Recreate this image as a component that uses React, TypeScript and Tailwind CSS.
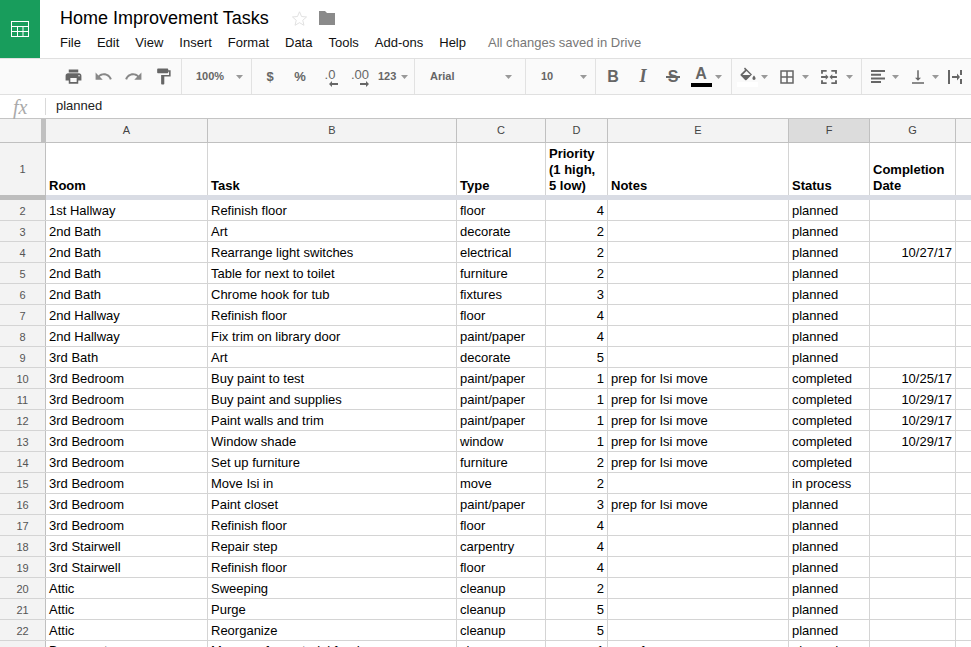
import React from "react";

const grid = "grid grid-cols-[46px_162px_249px_89px_62px_181px_81px_86px_16px]";

type R = [string, string, string, string, string, string, string];
const rows: R[] = [
  ["1st Hallway", "Refinish floor", "floor", "4", "", "planned", ""],
  ["2nd Bath", "Art", "decorate", "2", "", "planned", ""],
  ["2nd Bath", "Rearrange light switches", "electrical", "2", "", "planned", "10/27/17"],
  ["2nd Bath", "Table for next to toilet", "furniture", "2", "", "planned", ""],
  ["2nd Bath", "Chrome hook for tub", "fixtures", "3", "", "planned", ""],
  ["2nd Hallway", "Refinish floor", "floor", "4", "", "planned", ""],
  ["2nd Hallway", "Fix trim on library door", "paint/paper", "4", "", "planned", ""],
  ["3rd Bath", "Art", "decorate", "5", "", "planned", ""],
  ["3rd Bedroom", "Buy paint to test", "paint/paper", "1", "prep for Isi move", "completed", "10/25/17"],
  ["3rd Bedroom", "Buy paint and supplies", "paint/paper", "1", "prep for Isi move", "completed", "10/29/17"],
  ["3rd Bedroom", "Paint walls and trim", "paint/paper", "1", "prep for Isi move", "completed", "10/29/17"],
  ["3rd Bedroom", "Window shade", "window", "1", "prep for Isi move", "completed", "10/29/17"],
  ["3rd Bedroom", "Set up furniture", "furniture", "2", "prep for Isi move", "completed", ""],
  ["3rd Bedroom", "Move Isi in", "move", "2", "", "in process", ""],
  ["3rd Bedroom", "Paint closet", "paint/paper", "3", "prep for Isi move", "planned", ""],
  ["3rd Bedroom", "Refinish floor", "floor", "4", "", "planned", ""],
  ["3rd Stairwell", "Repair step", "carpentry", "4", "", "planned", ""],
  ["3rd Stairwell", "Refinish floor", "floor", "4", "", "planned", ""],
  ["Attic", "Sweeping", "cleanup", "2", "", "planned", ""],
  ["Attic", "Purge", "cleanup", "5", "", "planned", ""],
  ["Attic", "Reorganize", "cleanup", "5", "", "planned", ""],
  ["Basement", "Measure for material for door", "cleanup", "1", "prep for move", "planned", ""],
];

const Caret = ({ className = "" }: { className?: string }) => (
  <svg width="7" height="4" viewBox="0 0 7 4" className={"shrink-0 " + className}>
    <path d="M0 0h7L3.5 4z" fill="#999" />
  </svg>
);

const Icon = ({ d, size = 19, fill = "#666" }: { d: string; size?: number; fill?: string }) => (
  <svg width={size} height={size} viewBox="0 0 24 24" fill={fill}>
    <path d={d} />
  </svg>
);

const Btn = ({ children, w = "w-[30px]" }: { children: React.ReactNode; w?: string }) => (
  <div className={"relative flex h-full shrink-0 items-center justify-center " + w}>{children}</div>
);

const Group = ({ className, children }: { className: string; children: React.ReactNode }) => (
  <div className={"flex h-full shrink-0 items-center border-r border-[#e2e2e2] " + className}>{children}</div>
);

function Toolbar() {
  return (
    <div className="flex h-[35px] items-center bg-[#fafafa] font-['Liberation_Sans',sans-serif] text-[#555]">
      <Group className="w-[182px] pl-[58px]">
        <Btn><Icon d="M19 8H5c-1.66 0-3 1.34-3 3v6h4v4h12v-4h4v-6c0-1.66-1.34-3-3-3zm-3 11H8v-5h8v5zm3-7c-.55 0-1-.45-1-1s.45-1 1-1 1 .45 1 1-.45 1-1 1zm-1-9H6v4h12V3z" /></Btn>
        <Btn><Icon fill="#888" d="M12.5 8c-2.65 0-5.05.99-6.9 2.6L2 7v9h9l-3.62-3.62c1.39-1.16 3.16-1.88 5.12-1.88 3.54 0 6.55 2.31 7.6 5.5l2.37-.78C21.08 11.03 17.15 8 12.5 8z" /></Btn>
        <Btn><Icon fill="#888" d="M18.4 10.6C16.55 8.99 14.15 8 11.5 8c-4.65 0-8.58 3.03-9.96 7.22L3.9 16c1.05-3.19 4.05-5.5 7.6-5.5 1.95 0 3.73.72 5.12 1.88L13 16h9V7l-3.6 3.6z" /></Btn>
        <Btn><Icon d="M18 4V3c0-.55-.45-1-1-1H5c-.55 0-1 .45-1 1v4c0 .55.45 1 1 1h12c.55 0 1-.45 1-1V6h1v4H9v11c0 .55.45 1 1 1h2c.55 0 1-.45 1-1v-9h8V4h-3z" /></Btn>
      </Group>
      <Group className="w-[70px] pl-[14px]">
        <span className="w-[40px] text-[11px] font-bold text-[#666]">100%</span>
        <Caret />
      </Group>
      <Group className="w-[163px] pl-[3px]">
        <Btn><span className="text-[13px] font-bold text-[#666]">$</span></Btn>
        <Btn><span className="text-[13px] font-bold text-[#666]">%</span></Btn>
        <Btn>
          <span className="mb-[5px] text-[13px] leading-none text-[#666]">.0</span>
          <svg width="9" height="6" viewBox="0 0 9 6" className="absolute left-[14px] top-[22px]"><path d="M3 0v2h6v2H3v2L0 3z" fill="#666" /></svg>
        </Btn>
        <Btn>
          <span className="mb-[5px] text-[13px] leading-none text-[#666]">.00</span>
          <svg width="9" height="6" viewBox="0 0 9 6" className="absolute left-[15px] top-[22px]"><path d="M6 0v2H0v2h6v2l3-3z" fill="#666" /></svg>
        </Btn>
        <span className="ml-[3px] w-[23px] text-[11px] font-bold text-[#666]">123</span>
        <Caret />
      </Group>
      <Group className="w-[111px] pl-[15px]">
        <span className="w-[75px] text-[11px] font-bold text-[#666]">Arial</span>
        <Caret />
      </Group>
      <Group className="w-[70px] pl-[15px]">
        <span className="w-[39px] text-[11px] font-bold text-[#666]">10</span>
        <Caret />
      </Group>
      <Group className="w-[136px] pl-[2px]">
        <Btn><span className="text-[16px] font-bold text-[#666]">B</span></Btn>
        <Btn><span className="font-['Liberation_Serif',serif] text-[18px] font-bold italic text-[#666]">I</span></Btn>
        <Btn>
          <span className="text-[16px] font-bold text-[#666]">S</span>
          <span className="absolute left-[8px] top-[17px] h-[2px] w-[14px] bg-[#666]" />
        </Btn>
        <Btn w="w-[26px]">
          <span className="mb-[6px] text-[16px] font-bold leading-none text-[#666]">A</span>
          <span className="absolute left-[3px] top-[24px] h-[4px] w-[21px] bg-black" />
        </Btn>
        <Caret className="ml-[1px]" />
      </Group>
      <Group className="w-[130px] pl-[5px]">
        <Btn w="w-[22px]">
          <svg width="16" height="15" viewBox="0 0 16 15" className="mb-[5px]">
            <path d="M4 0l1-1 7 7-5.500 5.500a1 1 0 0 1-1.400 0L.7 7.100a1 1 0 0 1 0-1.400L5 1.500z M2.500 6.500h8L6.500 2.500z" fill="#666" fillRule="evenodd" transform="translate(0 1.500)" />
            <path d="M2.500 8h8l-4 3.800z" fill="#666" />
            <path d="M14 8.500s-1.600 1.800-1.600 2.800a1.600 1.600 0 0 0 3.200 0c0-1-1.600-2.800-1.600-2.800z" fill="#666" />
          </svg>
          <span className="absolute left-0 top-[23px] h-[5px] w-[21px] bg-white" />
        </Btn>
        <Caret className="ml-[2px]" />
        <div className="ml-[10px] flex h-full w-[18px] shrink-0 items-center justify-center">
          <Icon size={18} d="M3 3v18h18V3H3zm8 16H5v-6h6v6zm0-8H5V5h6v6zm8 8h-6v-6h6v6zm0-8h-6V5h6v6z" />
        </div>
        <Caret className="ml-[6px]" />
        <div className="ml-[12px] flex h-full w-[16px] shrink-0 items-center justify-center">
          <svg width="16" height="14" viewBox="0 0 17 15" fill="#666">
            <path d="M0 0h6v2H2v2H0zM11 0h6v4h-2V2h-4zM0 11h2v2h4v2H0zM15 11h2v4h-6v-2h4zM0 6.500h5V4.500l3 3-3 3v-2H0zM17 6.500h-5V4.500l-3 3 3 3v-2h5z" />
          </svg>
        </div>
        <Caret className="ml-[9px]" />
      </Group>
      <div className="flex h-full flex-1 items-center overflow-hidden pl-[9px]">
        <svg width="14" height="13" viewBox="0 0 14 13" fill="#666" className="shrink-0">
          <path d="M0 0h14v2H0zM0 3.700h10v2H0zM0 7.400h14v2H0zM0 11h10v2H0z" />
        </svg>
        <Caret className="ml-[7px]" />
        <div className="ml-[10px] shrink-0"><Icon size={18} d="M16 13h-3V3h-2v10H8l4 4 4-4zM4 19v2h16v-2H4z" /></div>
        <Caret className="ml-[5px]" />
        <svg width="14" height="14" viewBox="0 0 14 14" fill="#666" className="ml-[9px] shrink-0">
          <path d="M0 0h2v14H0zM12 0h2v5h-2v4h2v5h-2zM4 6h5V3.500L12 7 9 10.500V8H4z" />
        </svg>
      </div>
    </div>
  );
}

const Cell = ({ children, right, last }: { children?: React.ReactNode; right?: boolean; last?: boolean }) => (
  <div className={"overflow-hidden whitespace-nowrap border-r border-[#d4d4d4] px-[3px] " + (last ? "" : "pt-[1px] ") + (right ? "text-right" : "")}>
    {children}
  </div>
);

export default function App() {
  return (
    <div className="h-[647px] w-[971px] overflow-hidden bg-white font-['Liberation_Sans',Arial,sans-serif] text-black">
      {/* Title */}
      <header className="flex h-[59px] border-b border-[#e0e0e0]">
        <div className="flex h-[58px] w-[40px] shrink-0 items-center justify-center bg-[#189d5c]">
          <svg width="20" height="16" viewBox="0 0 20 16" fill="none" stroke="#fff" strokeWidth="1">
            <rect x="1.500" y="0.500" width="17" height="15" />
            <path d="M1.500 5.500h17M1.500 10.500h17M7.500 5.500v10M13 5.500v10" />
          </svg>
        </div>
        <div className="pl-[20px]">
          <div className="flex h-[35px] items-center pt-[1px]">
            <span className="text-[18px] leading-none text-black">Home Improvement Tasks</span>
            <svg width="17" height="17" viewBox="0 0 24 24" fill="none" stroke="#dedede" strokeWidth="1.300" className="ml-[22px]">
              <path d="M12 2.500l2.900 6.700 7.100.6-5.400 4.700 1.700 7.100L12 17.900l-6.300 3.700 1.700-7.100L2 9.800l7.100-.6z" />
            </svg>
            <svg width="16" height="14" viewBox="0 0 16 14" className="ml-[11px]">
              <path d="M0 0h6l2 2h8v12H0z" fill="#8a8a8a" />
            </svg>
          </div>
          <nav className="flex h-[15px] items-center gap-[16px] text-[13px] leading-none text-[#111]">
            <span>File</span>
            <span>Edit</span>
            <span>View</span>
            <span>Insert</span>
            <span>Format</span>
            <span>Data</span>
            <span>Tools</span>
            <span>Add-ons</span>
            <span>Help</span>
            <span className="ml-[6px] text-[#777]">All changes saved in Drive</span>
          </nav>
        </div>
      </header>

      <Toolbar />

      {/* Formula bar */}
      <div className="flex h-[25px] items-center border-y border-[#e0e0e0] border-b-[#c4c4c4]">
        <span className="w-[45px] pl-[13px] font-['Liberation_Serif',serif] text-[20px] italic leading-none text-[#aaa]">fx</span>
        <span className="h-[17px] w-px bg-[#d9d9d9]" />
        <span className="pb-[2px] pl-[10px] text-[13px] text-[#222]">planned</span>
      </div>

      {/* Column letters */}
      <div className={grid + " h-[24px] border-b border-[#c0c0c0] bg-[#f3f3f3] text-center text-[11px] leading-[23px] text-[#444]"}>
        <div className="flex justify-end border-r border-[#c0c0c0]"><span className="h-full w-[4px] bg-[#c0c0c0]" /></div>
        {["A", "B", "C", "D", "E"].map((c) => (
          <div key={c} className="border-r border-[#c0c0c0]">{c}</div>
        ))}
        <div className="border-r border-[#c0c0c0] bg-[#dcdcdc]">F</div>
        <div className="border-r border-[#c0c0c0]">G</div>
        <div />
      </div>

      {/* Row 1 */}
      <div className={grid + " h-[52px] text-[13px] font-bold leading-[16px]"}>
        <div className="flex items-center justify-center border-r border-[#c0c0c0] bg-[#f3f3f3] text-[11px] font-normal text-[#555]">1</div>
        {["Room", "Task", "Type", "Priority\n(1 high,\n5 low)", "Notes", "Status", "Completion\nDate"].map((t) => (
          <div key={t} className="flex items-end whitespace-pre-line border-r border-[#d4d4d4] px-[3px] pb-[1px]">{t}</div>
        ))}
        <div />
      </div>
      <div className={grid + " h-[5px] bg-[#d9dce4]"}>
        <div className="bg-[#bdbdbd]" />
      </div>

      {/* Data */}
      {rows.map((r, i) => {
        const last = i === rows.length - 1;
        return (
          <div key={i} className={grid + " h-[21px] grid-rows-[20px] border-b border-[#d4d4d4] text-[13px] leading-[20px]"}>
            <div className="overflow-hidden border-r border-[#c0c0c0] bg-[#f3f3f3] pt-[1px] text-center text-[11px] text-[#555]">{i + 2}</div>
            <Cell last={last}>{r[0]}</Cell>
            <Cell last={last}>{r[1]}</Cell>
            <Cell last={last}>{r[2]}</Cell>
            <Cell last={last} right>{r[3]}</Cell>
            <Cell last={last}>{r[4]}</Cell>
            <Cell last={last}>{r[5]}</Cell>
            <Cell last={last} right>{r[6]}</Cell>
            <div />
          </div>
        );
      })}
    </div>
  );
}
